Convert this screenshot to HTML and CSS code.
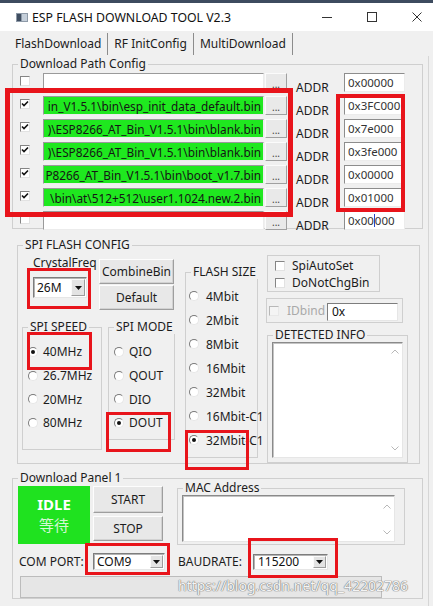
FILE: index.html
```html
<!DOCTYPE html>
<html lang="en">
<head>
<meta charset="utf-8">
<title>ESP FLASH DOWNLOAD TOOL V2.3</title>
<link rel="stylesheet" href="styles.css">
</head>
<body>
<div class="win">
  <div class="topline"></div>
  <header class="titlebar">
    <svg class="appicon" width="12" height="9" viewBox="0 0 12 9"><rect x="0" y="0" width="12" height="9" fill="#8e9aa8"/><rect x="1" y="1" width="4" height="7" fill="#3f4d60"/><rect x="6" y="1" width="5" height="7" fill="#c5cfda"/></svg>
    <span class="title">ESP FLASH DOWNLOAD TOOL V2.3</span>
    <div class="ctrls">
      <svg width="10" height="10" viewBox="0 0 10 10"><path d="M0 5.5H10" stroke="#333" stroke-width="1"/></svg>
      <svg width="10" height="10" viewBox="0 0 10 10"><rect x="0.5" y="0.5" width="9" height="9" fill="none" stroke="#333"/></svg>
      <svg width="10" height="10" viewBox="0 0 10 10"><path d="M0.5 0.5L9.5 9.5M9.5 0.5L0.5 9.5" stroke="#333"/></svg>
    </div>
  </header>
  <nav class="tabs"><span class="tab">FlashDownload</span><span class="tab">RF InitConfig</span><span class="tab">MultiDownload</span></nav>
  <main class="page">
    <fieldset class="grp paths">
      <legend>Download Path Config</legend>
      <div class="prows">
        <div class="prow"><span class="cb"></span><div class="path"></div><span class="dots">...</span><span class="alabel">ADDR</span><div class="addr">0x00000</div></div>
        <div class="prow"><span class="cb"><svg width="8" height="8" viewBox="0 0 8 8"><path d="M1 3.5L3 5.5L7 1.5" fill="none" stroke="#111" stroke-width="1.6"/></svg></span><div class="path ok"><span>in_V1.5.1\bin\esp_init_data_default.bin</span></div><span class="dots">...</span><span class="alabel">ADDR</span><div class="addr">0x3FC000</div></div>
        <div class="prow"><span class="cb"><svg width="8" height="8" viewBox="0 0 8 8"><path d="M1 3.5L3 5.5L7 1.5" fill="none" stroke="#111" stroke-width="1.6"/></svg></span><div class="path ok"><span>)\ESP8266_AT_Bin_V1.5.1\bin\blank.bin</span></div><span class="dots">...</span><span class="alabel">ADDR</span><div class="addr">0x7e000</div></div>
        <div class="prow"><span class="cb"><svg width="8" height="8" viewBox="0 0 8 8"><path d="M1 3.5L3 5.5L7 1.5" fill="none" stroke="#111" stroke-width="1.6"/></svg></span><div class="path ok"><span>)\ESP8266_AT_Bin_V1.5.1\bin\blank.bin</span></div><span class="dots">...</span><span class="alabel">ADDR</span><div class="addr">0x3fe000</div></div>
        <div class="prow"><span class="cb"><svg width="8" height="8" viewBox="0 0 8 8"><path d="M1 3.5L3 5.5L7 1.5" fill="none" stroke="#111" stroke-width="1.6"/></svg></span><div class="path ok"><span>P8266_AT_Bin_V1.5.1\bin\boot_v1.7.bin</span></div><span class="dots">...</span><span class="alabel">ADDR</span><div class="addr">0x00000</div></div>
        <div class="prow"><span class="cb"><svg width="8" height="8" viewBox="0 0 8 8"><path d="M1 3.5L3 5.5L7 1.5" fill="none" stroke="#111" stroke-width="1.6"/></svg></span><div class="path ok"><span>\bin\at\512+512\user1.1024.new.2.bin</span></div><span class="dots">...</span><span class="alabel">ADDR</span><div class="addr">0x01000</div></div>
        <div class="prow"><span class="cb"></span><div class="path"></div><span class="dots">...</span><span class="alabel">ADDR</span><div class="addr">0x00<span class="caret"></span>000</div></div>
      </div>
    </fieldset>

    <fieldset class="grp spi">
      <legend>SPI FLASH CONFIG</legend>
      <div class="spi-in">
        <div class="cola">
          <div class="ctop">
            <div class="crystal">
              <div class="clabel">CrystalFreq</div>
              <div class="combo c26"><span class="ctext">26M</span><span class="arr"><svg width="7" height="4" viewBox="0 0 7 4"><path d="M0 0H7L3.5 4Z" fill="#111"/></svg></span></div>
            </div>
            <div class="btns">
              <div class="btn">CombineBin</div>
              <div class="btn">Default</div>
            </div>
          </div>
          <div class="cbot">
            <fieldset class="grp speed">
              <legend>SPI SPEED</legend>
              <div class="rlist">
                <div class="ritem"><span class="radio on"></span>40MHz</div>
                <div class="ritem"><span class="radio"></span>26.7MHz</div>
                <div class="ritem"><span class="radio"></span>20MHz</div>
                <div class="ritem"><span class="radio"></span>80MHz</div>
              </div>
            </fieldset>
            <fieldset class="grp mode">
              <legend>SPI MODE</legend>
              <div class="rlist">
                <div class="ritem"><span class="radio"></span>QIO</div>
                <div class="ritem"><span class="radio"></span>QOUT</div>
                <div class="ritem"><span class="radio"></span>DIO</div>
                <div class="ritem"><span class="radio on"></span>DOUT</div>
              </div>
            </fieldset>
          </div>
        </div>
        <fieldset class="grp fsize">
          <legend>FLASH SIZE</legend>
          <div class="rlist fs">
            <div class="ritem"><span class="radio"></span>4Mbit</div>
            <div class="ritem"><span class="radio"></span>2Mbit</div>
            <div class="ritem"><span class="radio"></span>8Mbit</div>
            <div class="ritem"><span class="radio"></span>16Mbit</div>
            <div class="ritem"><span class="radio"></span>32Mbit</div>
            <div class="ritem"><span class="radio"></span>16Mbit-C1</div>
            <div class="ritem"><span class="radio on"></span>32Mbit-C1</div>
          </div>
        </fieldset>
        <div class="colc">
          <div class="opts">
            <div class="citem"><span class="cb"></span>SpiAutoSet</div>
            <div class="citem"><span class="cb"></span>DoNotChgBin</div>
          </div>
          <div class="idbind">
            <span class="cb dis"></span><span class="idtxt">IDbind</span><div class="idin">0x</div>
          </div>
          <fieldset class="grp detect">
            <legend>DETECTED INFO</legend>
            <div class="ta det-ta"><div class="ta-body"></div><div class="sb"><svg width="8" height="5" viewBox="0 0 8 5"><path d="M0.5 4.5L4 1L7.5 4.5" fill="none" stroke="#b8b8b8"/></svg><svg width="8" height="5" viewBox="0 0 8 5"><path d="M0.5 0.5L4 4L7.5 0.5" fill="none" stroke="#b8b8b8"/></svg></div></div>
          </fieldset>
        </div>
      </div>
    </fieldset>

    <fieldset class="grp panel">
      <legend>Download Panel 1</legend>
      <div class="prow1">
        <div class="idle"><span class="idle-en">IDLE</span><span class="idle-zh">等待</span></div>
        <div class="ss">
          <div class="btn start">START</div>
          <div class="btn stop">STOP</div>
        </div>
        <fieldset class="grp mac">
          <legend>MAC Address</legend>
          <div class="ta mac-ta"><div class="ta-body"></div><div class="sb"><svg width="8" height="5" viewBox="0 0 8 5"><path d="M0.5 4.5L4 1L7.5 4.5" fill="none" stroke="#b8b8b8"/></svg><svg width="8" height="5" viewBox="0 0 8 5"><path d="M0.5 0.5L4 4L7.5 0.5" fill="none" stroke="#b8b8b8"/></svg></div></div>
        </fieldset>
      </div>
      <div class="prow2">
        <span class="plabel">COM PORT:</span>
        <div class="combo com"><span class="ctext">COM9</span><span class="arr"><svg width="7" height="4" viewBox="0 0 7 4"><path d="M0 0H7L3.5 4Z" fill="#111"/></svg></span></div>
        <span class="blabel">BAUDRATE:</span>
        <div class="combo baud"><span class="ctext">115200</span><span class="arr"><svg width="7" height="4" viewBox="0 0 7 4"><path d="M0 0H7L3.5 4Z" fill="#111"/></svg></span></div>
      </div>
      <div class="progress"></div>
    </fieldset>
  </main>

  <div class="wm">https://blog.csdn.net/qq_42202786</div>

  <div class="hl hl-paths"></div>
  <div class="hl hl-addr"></div>
  <div class="hl hl-crystal"></div>
  <div class="hl hl-speed"></div>
  <div class="hl hl-dout"></div>
  <div class="hl hl-size"></div>
  <div class="hl hl-com"></div>
  <div class="hl hl-baud"></div>
</div>
</body>
</html>
```

FILE: styles.css
```css
* { box-sizing: border-box; }
html, body { margin: 0; padding: 0; }
body {
  width: 433px;
  height: 606px;
  overflow: hidden;
  background: #f0f0f0;
  font-family: "Noto Sans", "Noto Sans CJK SC", sans-serif;
  font-size: 12px;
  color: #1c1c1c;
}
.win { position: relative; width: 433px; height: 606px; overflow: hidden; }

.topline { height: 3px; background: #3d4b5f; }
.titlebar { height: 28px; background: #fff; display: flex; align-items: center; }
.appicon { margin-left: 16px; flex: none; }
.title { margin-left: 4px; font-size: 12.3px; color: #111; white-space: nowrap; }
.ctrls { margin-left: auto; margin-right: 11px; display: flex; align-items: center; gap: 35px; }
.ctrls svg { display: block; }

.tabs { height: 25px; display: flex; align-items: center; padding-left: 9px; }
.tab { padding: 0 6px; line-height: 22px; border-right: 1px solid #8c8c8c; white-space: nowrap; }

.page {
  display: flex;
  flex-direction: column;
  align-items: flex-start;
  width: 429px;
  height: 550px;
  border-right: 1px solid #d6d6d6;
}

.grp { margin: 0; padding: 0; border: 1px solid #cfcfcf; min-width: 0; }
.grp > legend { margin-left: 5px; padding: 0 2px; line-height: 14px; font-size: 12px; color: #1c1c1c; white-space: nowrap; }

/* Download Path Config */
.paths { margin: 1px 0 0 12px; width: 411px; }
.prows { height: 157px; padding: 2px 0 0 7px; }
.prow { display: grid; grid-template-columns: 23px 222px 24px 55px 61px; height: 23px; align-items: start; }
.cb {
  display: block;
  flex: none;
  width: 10px;
  height: 10px;
  margin-top: 3px;
  background: #fff;
  border: 1px solid;
  border-color: #858585 #e2e2e2 #e2e2e2 #858585;
}
.cb svg { display: block; }
.cb.dis { background: #f4f4f4; border-color: #b8b8b8 #e8e8e8 #e8e8e8 #b8b8b8; }
.path {
  width: 221px;
  height: 19px;
  display: flex;
  justify-content: flex-end;
  align-items: center;
  overflow: hidden;
  white-space: nowrap;
  padding: 0 2px 0 1px;
  font-size: 11.8px;
  background: #fff;
  border: 1px solid;
  border-color: #9a9a9a #ececec #ececec #9a9a9a;
}
.path.ok { background: #1fe81f; color: #151515; }
.dots {
  width: 22px;
  height: 19px;
  display: flex;
  align-items: flex-end;
  justify-content: center;
  font-size: 10px;
  line-height: 13px;
  color: #444;
  background: #e9e9e9;
  border: 1px solid;
  border-color: #fbfbfb #a0a0a0 #a0a0a0 #fbfbfb;
}
.alabel { padding: 8px 0 0 7px; line-height: 14px; font-size: 12px; }
.addr {
  width: 61px;
  height: 19px;
  padding-left: 3px;
  line-height: 17px;
  font-size: 11.5px;
  overflow: hidden;
  white-space: nowrap;
  background: #fff;
  color: #333;
  border: 1px solid;
  border-color: #8d8d8d #ececec #ececec #8d8d8d;
}
.caret { display: inline-block; width: 1px; height: 13px; background: #2a45c8; vertical-align: -2px; }

/* SPI FLASH CONFIG */
.spi { margin: 9px 0 0 17px; width: 403px; }
.spi-in { display: flex; align-items: flex-start; height: 211px; padding-top: 4px; }
.cola { margin-left: 4px; width: 154px; flex: none; }
.ctop { display: flex; height: 54px; }
.crystal { margin-left: 11px; width: 62px; }
.clabel { line-height: 14px; white-space: nowrap; }
.combo {
  display: flex;
  align-items: stretch;
  background: #fff;
  border: 1px solid;
  border-color: #7d7d7d #e6e6e6 #e6e6e6 #7d7d7d;
  box-shadow: inset 1px 1px 0 #b4b4b4;
}
.ctext { padding-left: 3px; display: flex; align-items: center; white-space: nowrap; color: #111; }
.arr {
  width: 14px;
  margin: 1px 1px 1px auto;
  display: flex;
  align-items: center;
  justify-content: center;
  background: #e3e3e3;
  border: 1px solid;
  border-color: #fafafa #9c9c9c #9c9c9c #fafafa;
}
.arr svg { display: block; }
.c26 { width: 54px; height: 21px; margin-top: 7px; }
.btns { margin-left: 4px; width: 75px; margin-top: 3px; display: flex; flex-direction: column; gap: 1px; }
.btn {
  height: 25px;
  display: flex;
  align-items: center;
  justify-content: center;
  white-space: nowrap;
  color: #1c1c1c;
  background: #e8e8e8;
  border: 1px solid;
  border-color: #fdfdfd #9e9e9e #9e9e9e #fdfdfd;
  box-shadow: inset -1px -1px 0 #d2d2d2;
}
.cbot { display: flex; gap: 6px; margin-top: 10px; }
.speed { width: 80px; height: 130px; }
.mode { width: 67px; height: 120px; }
.rlist { padding: 6px 0 0 5px; }
.ritem { display: flex; align-items: center; gap: 5px; height: 23.7px; white-space: nowrap; }
.radio {
  flex: none;
  width: 10px;
  height: 10px;
  border-radius: 50%;
  display: flex;
  align-items: center;
  justify-content: center;
  background: #fff;
  border: 1px solid;
  border-color: #7a7a7a #e6e6e6 #e6e6e6 #7a7a7a;
}
.radio.on::after { content: ""; width: 4px; height: 4px; border-radius: 50%; background: #111; }
.fsize { margin: 9px 0 0 9px; width: 73px; height: 193px; flex: none; }
.rlist.fs { padding: 5px 0 0 3px; }
.rlist.fs .ritem { height: 24px; gap: 7px; }

.colc { margin-left: 8px; width: 142px; display: flex; flex-direction: column; align-items: flex-start; flex: none; }
.opts { margin: -1px 0 0 1px; width: 113px; height: 37px; border: 1px solid #cfcfcf; padding: 1px 0 0 7px; }
.citem { display: flex; align-items: center; gap: 7px; height: 17px; white-space: nowrap; }
.citem .cb { margin-top: 0; }
.idbind { margin-top: 6px; width: 137px; height: 25px; border: 1px solid #cfcfcf; display: flex; align-items: flex-start; padding-left: 2px; }
.idbind .cb { margin-top: 7px; }
.idtxt { margin: 5px 0 0 8px; line-height: 14px; color: #a9a9a9; }
.idin {
  margin: 4px 4px 0 auto;
  width: 71px;
  height: 18px;
  padding-left: 4px;
  line-height: 16px;
  background: #fff;
  color: #111;
  border: 1px solid;
  border-color: #7d7d7d #e6e6e6 #e6e6e6 #7d7d7d;
}
.detect { margin: 5px 0 0 1px; width: 141px; height: 135px; }
.ta {
  display: flex;
  background: #fff;
  border: 1px solid;
  border-color: #8a8a8a #e6e6e6 #e6e6e6 #8a8a8a;
  box-shadow: inset 1px 1px 0 #c4c4c4;
}
.ta-body { flex: 1; }
.sb { width: 14px; display: flex; flex-direction: column; justify-content: space-between; align-items: center; padding: 6px 0 6px; }
.sb svg { display: block; }
.det-ta { margin-left: 4px; width: 131px; height: 116px; }

/* Download Panel 1 */
.panel { margin: 7px 0 0 12px; width: 411px; }
.prow1 { display: flex; align-items: flex-start; height: 59px; }
.idle {
  margin: 1px 0 0 5px;
  width: 72px;
  height: 58px;
  flex: none;
  background: #1fe21f;
  display: flex;
  flex-direction: column;
  align-items: center;
  justify-content: center;
  line-height: 21px;
  font-size: 15px;
}
.idle-en { color: #fff; font-weight: bold; }
.idle-zh { color: #d4f8d4; }
.ss { margin: 1px 0 0 3px; width: 70px; display: flex; flex-direction: column; gap: 3px; flex: none; }
.btn.start { height: 27px; }
.btn.stop { height: 25px; }
.mac { margin: -4px 0 0 14px; width: 228px; height: 64px; flex: none; }
.mac-ta { margin-left: 4px; width: 213px; height: 47px; }
.mac-ta .sb { padding: 8px 0 6px; }
.prow2 { display: flex; align-items: center; height: 17px; margin-top: 9px; }
.plabel { margin-left: 6px; width: 74px; white-space: nowrap; }
.com { width: 72px; height: 17px; }
.blabel { margin-left: 13px; width: 75px; white-space: nowrap; }
.baud { width: 75px; height: 16px; }
.baud .ctext { padding-left: 4px; }
.com .arr, .baud .arr { width: 13px; }
.progress { margin: 6px 0 0 7px; width: 362px; height: 22px; background: #e6e6e6; border: 1px solid #bcbcbc; }

/* overlays */
.wm {
  position: absolute;
  left: 178px;
  top: 576px;
  font-size: 14px;
  white-space: nowrap;
  color: #f4f4f4;
  text-shadow: 0 0 1px #777, 0 0 1px #777, 0 0 1px #999;
}
.hl { position: absolute; border: 3px solid #e8141b; }
.hl-paths { left: 5px; top: 88px; width: 288px; height: 129px; border-width: 5px; }
.hl-addr { left: 336px; top: 94px; width: 69px; height: 118px; border-width: 4px; }
.hl-crystal { left: 27px; top: 268px; width: 64px; height: 41px; }
.hl-speed { left: 27px; top: 332px; width: 65px; height: 38px; }
.hl-dout { left: 106px; top: 412px; width: 65px; height: 40px; }
.hl-size { left: 185px; top: 430px; width: 64px; height: 40px; }
.hl-com { left: 85px; top: 543px; width: 85px; height: 32px; }
.hl-baud { left: 248px; top: 538px; width: 90px; height: 40px; }
```
